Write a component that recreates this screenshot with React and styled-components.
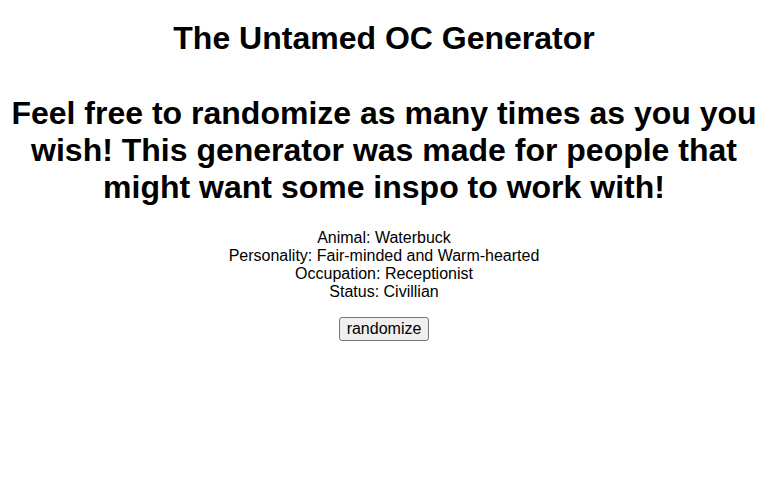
import React, { useState } from 'react';
import styled, { createGlobalStyle } from 'styled-components';

const GlobalStyle = createGlobalStyle`
	body {
		margin: 0;
		padding: 0 8px;
		background: #ffffff;
		color: #000000;
		font-family: "Liberation Sans", Arial, sans-serif;
	}
`

const animals = ['Waterbuck', 'Red Panda', 'Snow Leopard', 'Crane', 'Fox']
const personalities = ['Fair-minded and Warm-hearted', 'Bold and Stubborn', 'Quiet and Clever']
const occupations = ['Receptionist', 'Healer', 'Blacksmith', 'Scholar']
const statuses = ['Civillian', 'Cultivator', 'Noble']

const pick = list => list[Math.floor(Math.random() * list.length)]

function App() {
	const [oc, setOc] = useState({
		animal: 'Waterbuck',
		personality: 'Fair-minded and Warm-hearted',
		occupation: 'Receptionist',
		status: 'Civillian',
	})

	const randomize = () => {
		setOc({
			animal: pick(animals),
			personality: pick(personalities),
			occupation: pick(occupations),
			status: pick(statuses),
		})
	}

	return (
		<Page>
			<GlobalStyle />
			<Title>The Untamed OC Generator</Title>
			<Tagline>
				Feel free to randomize as many times as you you wish! This generator was made for people that might want some inspo to work with!
			</Tagline>
			<Stats>
				<Stat>Animal: {oc.animal}</Stat>
				<Stat>Personality: {oc.personality}</Stat>
				<Stat>Occupation: {oc.occupation}</Stat>
				<Stat>Status: {oc.status}</Stat>
			</Stats>
			<RandomButton onClick={randomize}>randomize</RandomButton>
		</Page>
	);
}

const Page = styled.div`
	display: flex;
	flex-direction: column;
	align-items: center;
	text-align: center;
	padding-top: 20px;
`

const Title = styled.h1`
	font-size: 32px;
	font-weight: bold;
	line-height: 37px;
	margin: 0;
`

const Tagline = styled.h1`
	font-size: 32px;
	font-weight: bold;
	line-height: 37px;
	margin: 38px 0 23px;
`

const Stats = styled.div`
	display: flex;
	flex-direction: column;
	align-items: center;
	font-size: 16px;
	line-height: 18px;
	margin-bottom: 16px;
`

const Stat = styled.div``

const RandomButton = styled.button`
	font-family: "Liberation Sans", Arial, sans-serif;
	font-size: 16px;
	line-height: 18px;
	color: #000000;
	background-color: #efefef;
	border: 1px solid #767676;
	border-radius: 3px;
	padding: 2px 7px;
	cursor: pointer;
`

export default App;
